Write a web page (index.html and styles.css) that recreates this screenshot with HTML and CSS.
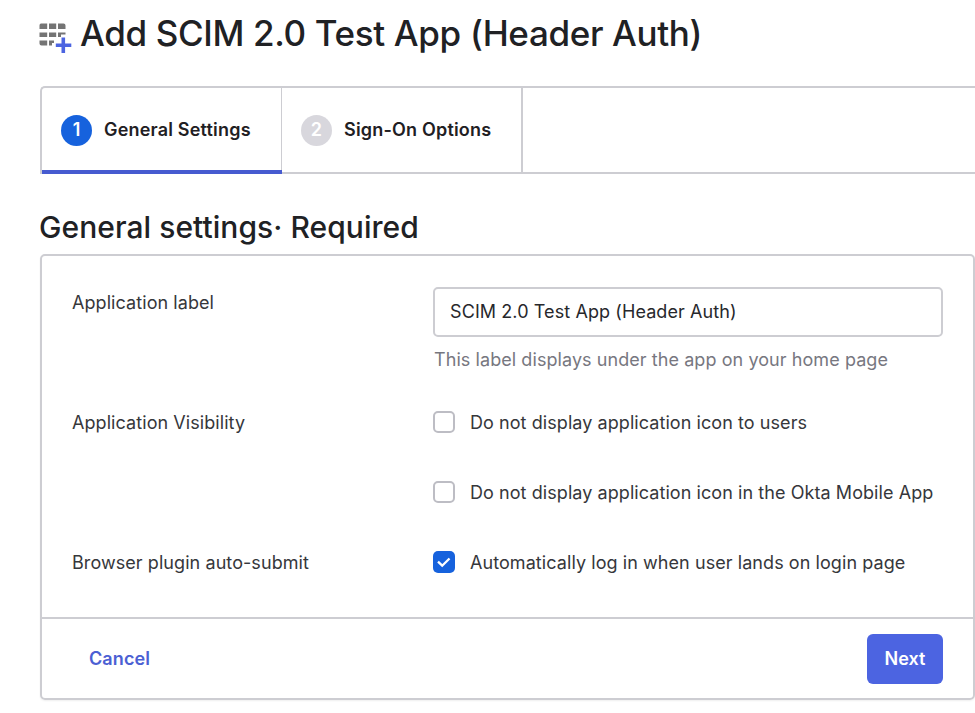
FILE: index.html
```html
<!DOCTYPE html>
<html lang="en">
<head>
<meta charset="utf-8">
<title>Add SCIM 2.0 Test App (Header Auth)</title>
<link rel="stylesheet" href="styles.css">
</head>
<body>
<header class="page-header">
  <svg class="app-icon" viewBox="0 0 33 31" width="33" height="31" aria-hidden="true">
    <g fill="#747474">
      <path d="M2 .5h6.200v5.500H.5V2.500q0-2 1.500-2zM10 .5h7.200v5.500H10zM19 .5h5.500q2 0 2 2V6H19z"/>
      <path d="M.5 9.500h7.700v4.500H.5zM10 9.500h7.200v4.500H10zM19 9.500h7.500v2h-4.500v2.500h-3z"/>
      <path d="M.5 17.500h7.700v5H2.500q-2 0-2-2zM10 17.500h5v2.500h-2v2.500h-3z"/>
    </g>
    <path d="M24.300 14.500v15.500M16.800 22.300h15.500" stroke="#4c64e1" stroke-width="3.600"/>
  </svg>
  <h1 class="page-title">Add SCIM 2.0 Test App (Header Auth)</h1>
</header>
<nav class="steps">
  <div class="step step-active"><span class="step-number">1</span><span class="step-label">General Settings</span></div>
  <div class="step"><span class="step-number">2</span><span class="step-label">Sign-On Options</span></div>
</nav>
<h2 class="section-title">General settings· Required</h2>
<form class="card">
  <div class="fields">
    <div class="row row-label">
      <label class="name" for="app-label">Application label</label>
      <div class="control">
        <input class="text-input" id="app-label" type="text" value="SCIM 2.0 Test App (Header Auth)">
        <p class="hint">This label displays under the app on your home page</p>
      </div>
    </div>
    <div class="row row-visibility">
      <span class="name">Application Visibility</span>
      <div class="control checks">
        <label class="check"><input class="box" type="checkbox"><span>Do not display application icon to users</span></label>
        <label class="check"><input class="box" type="checkbox"><span>Do not display application icon in the Okta Mobile App</span></label>
      </div>
    </div>
    <div class="row">
      <span class="name">Browser plugin auto-submit</span>
      <div class="control">
        <label class="check"><span class="box box-checked"><svg viewBox="0 0 22 22" width="22" height="22" aria-hidden="true"><path d="M5 10.700l4.200 4 7.300-7.200" fill="none" stroke="#fff" stroke-width="2.300"/></svg></span><span>Automatically log in when user lands on login page</span></label>
      </div>
    </div>
  </div>
  <footer class="actions">
    <a class="cancel">Cancel</a>
    <button class="next" type="button">Next</button>
  </footer>
</form>
</body>
</html>
```
FILE: styles.css
```css
* { box-sizing: border-box; }
body {
  margin: 0;
  padding: 0 0 0 40px;
  height: 713px;
  overflow: hidden;
  background: #fff;
  color: #36373b;
  font: 18px/26px Inter, "Liberation Sans", sans-serif;
  letter-spacing: 0.07px;
}
h1, h2, p { margin: 0; }
.page-header {
  display: flex;
  align-items: flex-start;
  height: 86px;
}
.app-icon { margin: 23px 8px 0 -1px; flex: none; }
.page-title {
  margin-top: 12px;
  color: #202124;
  font-size: 35px;
  line-height: 42px;
  font-weight: 550;
  letter-spacing: -0.35px;
  white-space: nowrap;
}
.steps {
  display: flex;
  height: 88px;
  border: solid #cdcdd2;
  border-width: 2px 0 2px 2px;
  border-radius: 5px 0 0 0;
}
.step {
  display: flex;
  align-items: center;
  gap: 12px;
  width: 241px;
  padding-left: 19px;
  border-right: 2px solid #cdcdd2;
}
.step-active {
  width: 240px;
  height: 86px;
  padding-top: 2px;
  border-right: 0;
  border-bottom: 4px solid #465bd0;
  box-shadow: inset -1px 0 #cdcdd2;
}
.step-number {
  display: grid;
  place-items: center;
  width: 31px;
  height: 31px;
  border-radius: 50%;
  background: #d8d7dd;
  color: #fff;
  font-weight: 600;
}
.step-active .step-number { background: #1662dd; }
.step-label {
  color: #1f2023;
  font-weight: 600;
  letter-spacing: 0.19px;
  white-space: nowrap;
}
.section-title {
  height: 80px;
  padding-top: 33px;
  color: #202124;
  font-size: 30px;
  line-height: 40px;
  font-weight: 550;
  letter-spacing: 0.05px;
  white-space: nowrap;
  margin-left: -1px;
}
.card {
  width: 935px;
  height: 446px;
  border: 2px solid #cdcdd2;
  border-radius: 5px;
  box-shadow: 0 1px 2px #0001;
}
.fields { height: 361px; padding: 31px 30px 0; }
.row { display: flex; }
.row-label { height: 122px; }
.row-visibility { height: 140px; }
.name { width: 361px; padding-top: 1px; flex: none; white-space: nowrap; }
.row-label .name { padding-top: 3px; }
.control { flex: 1; min-width: 0; }
.text-input {
  display: block;
  width: 510px;
  height: 50px;
  padding: 0 15px 1px 15px;
  border: 2px solid #cdcdd2;
  border-radius: 5px;
  background: #fff;
  color: #27282c;
  font: inherit;
  letter-spacing: 0.09px;
}
.hint { padding: 10px 0 0 1px; color: #77777f; white-space: nowrap; }
.checks { display: flex; flex-direction: column; gap: 44px; }
.check { display: flex; align-items: center; gap: 15px; height: 26px; white-space: nowrap; }
.check span:last-child { padding-top: 2px; }
.box {
  appearance: none;
  flex: none;
  width: 22px;
  height: 22px;
  margin: 0;
  border: 2px solid #bdbdc4;
  border-radius: 5px;
}
.box-checked { display: block; border: 0; background: #1662dd; }
.box-checked svg { display: block; }
.actions {
  display: flex;
  align-items: center;
  justify-content: space-between;
  height: 81px;
  padding: 0 30px 0 47px;
  border-top: 2px solid #cdcdd2;
}
.cancel { color: #4b60d3; font-weight: 600; letter-spacing: 0.1px; }
.next {
  width: 76px;
  height: 50px;
  padding: 0;
  border: 0;
  border-radius: 6px;
  background: #4c64e1;
  color: #fff;
  font: inherit;
  font-weight: 600;
}
```
